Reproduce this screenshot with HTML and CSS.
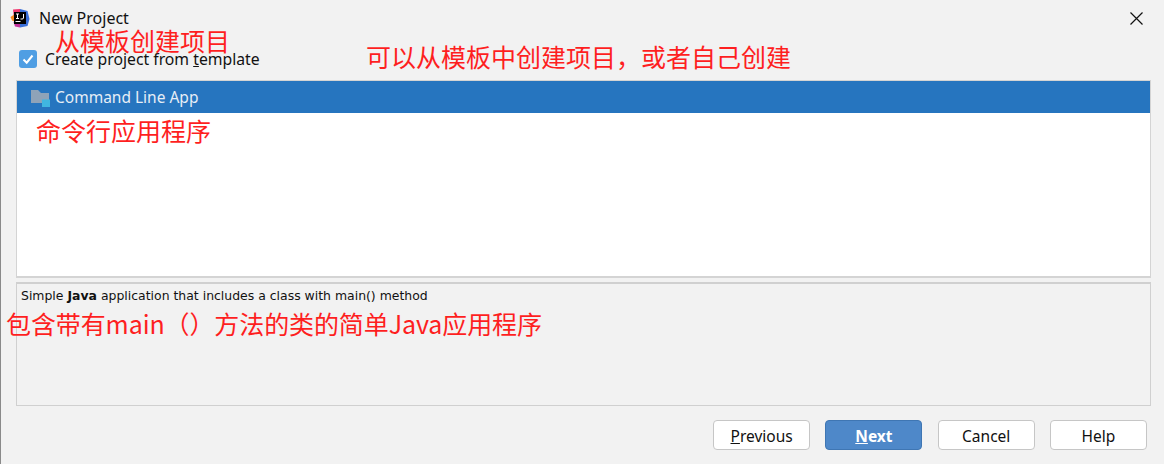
FILE: index.html
```html
<!DOCTYPE html>
<html lang="zh-CN">
<head>
  <meta charset="UTF-8">
  <title>New Project</title>
  <link rel="stylesheet" href="styles.css">
</head>
<body>
  <div class="dialog">
    <header class="title-bar">
      <svg class="app-logo" width="20" height="20" viewBox="0 0 20 20">
        <path d="M3 1.5 L10 1 L11 8 L4 10 Z" fill="#f0346c"/>
        <path d="M0.5 9 L5 6 L6 14 L2 12.5 Z" fill="#f58a1f"/>
        <path d="M3.5 14 L11 12 L10 19.5 L5 18.5 Z" fill="#c2339c"/>
        <path d="M10 1 L17.5 3 L19.5 11 L17.5 18 L10 19.5 Z" fill="#3a6fd8"/>
        <rect x="4" y="4" width="12" height="12" fill="#000"/>
        <rect x="5.5" y="13" width="5" height="1" fill="#fff"/>
        <path d="M6 6 H9 M7.5 6 V10.5 M6 10.5 H9 M13.5 6 V10 Q13.5 11 12 11 H10.5" fill="none" stroke="#fff" stroke-width="1"/>
      </svg>
      <span class="title-text">New Project</span>
      <svg class="close-icon" width="13" height="13" viewBox="0 0 13 13">
        <path d="M0.5 0.5 L12.5 12.5 M12.5 0.5 L0.5 12.5" stroke="#111" stroke-width="1.2" fill="none"/>
      </svg>
    </header>

    <div class="template-row">
      <span class="checkbox">
        <svg width="12" height="12" viewBox="0 0 12 12">
          <path d="M1.5 6.5 L4.7 9.7 L10.5 2.5" stroke="#fff" stroke-width="2" fill="none"/>
        </svg>
      </span>
      <label class="check-label">Create project from <u>t</u>emplate</label>
    </div>

    <div class="template-list">
      <div class="list-item selected">
        <svg class="folder-icon" width="20" height="18" viewBox="0 0 20 18">
          <path d="M0 1 H7 L10 4 H18 V14 H0 Z" fill="#8ea3b8"/>
          <rect x="11" y="10.5" width="8" height="7.5" fill="#40b6e0"/>
        </svg>
        <span>Command Line App</span>
      </div>
    </div>

    <div class="description">
      Simple <b>Java</b> application that includes a class with main() method
    </div>

    <footer class="button-row">
      <button class="btn"><u>P</u>revious</button>
      <button class="btn default"><u>N</u>ext</button>
      <button class="btn">Cancel</button>
      <button class="btn">Help</button>
    </footer>
  </div>

  <!-- red notes pasted over the screenshot -->
  <span class="note note-template">从模板创建项目</span>
  <span class="note note-either">可以从模板中创建项目，或者自己创建</span>
  <span class="note note-cmd">命令行应用程序</span>
  <span class="note note-desc">包含带有main（）方法的类的简单Java应用程序</span>
</body>
</html>
```

FILE: styles.css
```css
* {
  box-sizing: border-box;
  margin: 0;
  padding: 0;
}

html, body {
  height: 100%;
}

body {
  position: relative;
  background: #f2f2f2;
  overflow: hidden;
  font-family: "Noto Sans", "Open Sans", sans-serif;
  font-size: 14px;
  color: #111;
}

.dialog {
  display: flex;
  flex-direction: column;
  height: 464px;
  padding: 0 13px 14px 15px;
  border-left: 1px solid #8a8a8a;
}

.title-bar {
  display: flex;
  align-items: center;
  height: 36px;
  margin-left: -6px;
  padding-right: 2px;
}

.app-logo {
  margin-right: 9px;
}

.title-text {
  flex: 1;
  font-size: 16px;
}

.close-icon {
  margin-right: 6px;
}

.template-row {
  display: flex;
  align-items: center;
  height: 32px;
  padding-left: 3px;
  margin-top: 7px;
}

.checkbox {
  display: flex;
  align-items: center;
  justify-content: center;
  width: 18px;
  height: 18px;
  margin-right: 8px;
  background: #4f9ee3;
  border-radius: 3px;
}

.check-label {
  font-size: 15.75px;
}

.template-list {
  height: 198px;
  margin-top: 5px;
  background: #fff;
  border: 1px solid #d4d4d4;
  border-bottom-width: 2px;
}

.list-item {
  display: flex;
  align-items: center;
  height: 32px;
  padding-left: 14px;
  font-size: 15.5px;
}

.list-item.selected {
  background: #2675bf;
  color: #e6eef6;
}

.folder-icon {
  margin-right: 4px;
  margin-top: 2px;
}

.description {
  height: 124px;
  margin-top: 4px;
  padding: 4px 4px;
  border: 1px solid #d0d0d0;
  border-top-width: 2px;
  font-family: "DejaVu Sans", sans-serif;
  font-size: 12.45px;
  line-height: 16px;
}

.button-row {
  display: flex;
  justify-content: flex-end;
  gap: 15.3px;
  margin-top: 14px;
  padding-right: 4px;
}

.btn {
  width: 97px;
  height: 30px;
  padding-top: 2px;
  background: #fff;
  border: 1px solid #c6c6c6;
  border-radius: 4px;
  font-family: inherit;
  font-size: 15.5px;
  color: #111;
}

.btn.default {
  background: #4e88c9;
  border-color: #3f76b3;
  color: #fff;
  font-weight: 700;
}

.note {
  position: absolute;
  color: #fe1f1f;
  font-family: "Noto Sans CJK SC", "Noto Sans", sans-serif;
  font-size: 25px;
  line-height: 34px;
  white-space: nowrap;
}

.note-template { left: 55px; top: 23px; }
.note-either { left: 366px; top: 39px; }
.note-cmd { left: 36px; top: 113px; }
.note-desc { left: 6px; top: 306px; letter-spacing: -0.1px; }
```
